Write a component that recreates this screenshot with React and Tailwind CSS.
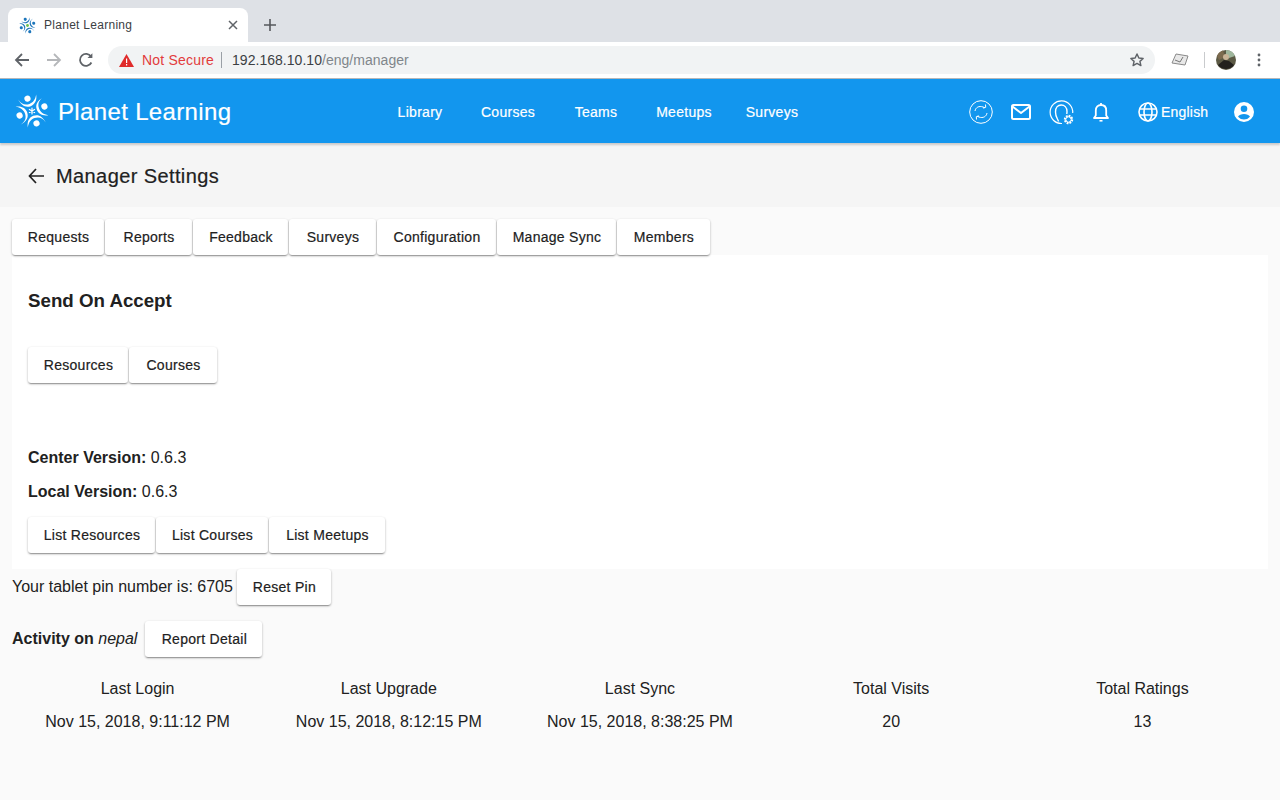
import React from "react";

const F = "font-['Liberation_Sans',Arial,sans-serif]";

function Btn({ children, className = "" }) {
  return (
    <button className={`h-9 pl-px bg-white rounded-[3px] text-[14px] tracking-[0.28px] [-webkit-text-stroke:0.2px] text-[#212121] whitespace-nowrap shadow-[0_2px_1px_-1px_rgba(0,0,0,0.2),0_1px_2px_0_rgba(0,0,0,0.22),0_1px_3px_0_rgba(0,0,0,0.12)] ${className}`}>
      {children}
    </button>
  );
}

function Logo({ size, dark }) {
  const main = dark ? "#1b75bb" : "#fff";
  const arms = [-20, 70, 160, 250];
  return (
    <svg width={size} height={size} viewBox="0 0 34 34">
      {arms.map((a) => (
        <g key={a} transform={`rotate(${a} 17 17)`}>
          <circle cx="17" cy="3.800" r="3.100" fill={main} />
          <path d="M8 1.500C9 7 12.500 9.500 17 9.500C21 9.500 24 7.500 26.500 3C25.500 9 21.500 12 17.500 12C12 12 8.800 8 8 1.500Z" fill={main} />
        </g>
      ))}
      {dark ? <circle cx="17" cy="17" r="2.800" fill="#6cbf4b" /> : (
        <g stroke="#fff" strokeWidth="1.200" strokeLinecap="round">
          <path d="M17 14v6M14.400 15.500l5.200 3M19.600 15.500l-5.200 3" />
        </g>
      )}
    </svg>
  );
}

function NavLink({ children }) {
  return <span className="w-[88px] text-[14px] tracking-[0.28px] [-webkit-text-stroke:0.2px] text-white text-center">{children}</span>;
}

export default function App() {
  return (
    <div className={`${F} w-[1280px] h-[800px] overflow-hidden bg-[#fafafa] text-[#212121] flex flex-col`}>
      {/* tab strip */}
      <div className="h-[42px] bg-[#dee1e6] flex items-end pl-2 shrink-0">
        <div className="w-[240px] h-[34px] bg-white rounded-t-[8px] flex items-center pl-[11px] pr-[10px]">
          <Logo size={17} dark />
          <span className="ml-[8px] text-[12px] tracking-[0.28px] text-[#3c4043] flex-1">Planet Learning</span>
          <svg width="10" height="10" viewBox="0 0 10 10" stroke="#5f6368" strokeWidth="1.5"><path d="M1 1l8 8M9 1l-8 8" /></svg>
        </div>
        <div className="w-[44px] h-[34px] flex items-center justify-center">
          <svg width="14" height="14" viewBox="0 0 14 14" stroke="#55585c" strokeWidth="1.6"><path d="M7 1v12M1 7h12" /></svg>
        </div>
      </div>

      {/* address toolbar */}
      <div className="h-[37px] bg-white border-b border-[#b4b6b9] flex items-center shrink-0">
        <div className="w-[108px] flex items-center pl-[14px] gap-[16px] shrink-0">
          <svg width="16" height="16" viewBox="0 0 16 16" fill="none" stroke="#5f6368" strokeWidth="1.8"><path d="M15 8H2M8 2L2 8l6 6" /></svg>
          <svg width="16" height="16" viewBox="0 0 16 16" fill="none" stroke="#b5b7ba" strokeWidth="1.8"><path d="M1 8h13M8 2l6 6-6 6" /></svg>
          <svg width="16" height="16" viewBox="0 0 16 16" fill="none" stroke="#5f6368" strokeWidth="1.8"><path d="M13.400 10.500A6 6 0 1 1 13 4.600" /><path d="M14.400 1.200v4.900H9.500z" fill="#5f6368" stroke="none" /></svg>
        </div>
        <div className="w-[1047px] h-7 rounded-full bg-[#f1f3f4] flex items-center pl-[11px] pr-[10px] shrink-0">
          <svg width="15" height="13" viewBox="0 0 15 13"><path d="M7.500 0L15 13H0z" fill="#e02b2b" /><path d="M7 4.500h1.200V9H7zM7 10h1.200v1.400H7z" fill="#fff" /></svg>
          <span className="ml-[8px] text-[14px] tracking-[0.2px] text-[#e23c3c]">Not Secure</span>
          <span className="w-px h-4 bg-[#9aa0a6] ml-[7px] mr-[10px]" />
          <span className="text-[14px] tracking-[0.03px] text-[#3c4043]">192.168.10.10<span className="text-[#80868b]">/eng/manager</span></span>
          <span className="flex-1" />
          <svg width="16" height="16" viewBox="0 0 24 24" fill="none" stroke="#5f6368" strokeWidth="2.200" strokeLinejoin="round"><path d="M12 3l2.800 6 6.400.7-4.800 4.300 1.400 6.400L12 17.100l-5.800 3.300 1.400-6.400L2.800 9.700l6.400-.7z" /></svg>
        </div>
        <div className="flex-1 flex items-center pl-[16px]">
          <svg width="18" height="14" viewBox="0 0 18 14"><path d="M5 1l12 2-3 9-13-2z" fill="#e8e8e8" stroke="#8a8a8a" strokeWidth="1" /><path d="M4 7l5 2 3-5" fill="none" stroke="#777" strokeWidth="1" /></svg>
          <span className="w-px h-4 bg-[#c9cbcd] ml-[15px]" />
          <svg className="ml-[11px]" width="20" height="20" viewBox="0 0 20 20">
            <circle cx="10" cy="10" r="10" fill="#5c5a45" />
            <path d="M10 0a10 10 0 0 1 9 6l-6 2-3-3z" fill="#9fb79d" />
            <path d="M1 6a10 10 0 0 1 6-5.500L9 7 3 10z" fill="#7b6a4e" />
            <circle cx="10" cy="7" r="3" fill="#c9b497" />
            <path d="M2 15l6-5 5 1 5 4a10 10 0 0 1-16 0z" fill="#23211d" />
          </svg>
          <svg className="ml-[21px]" width="4" height="14" viewBox="0 0 4 14" fill="#5f6368"><circle cx="2" cy="2" r="1.400" /><circle cx="2" cy="7" r="1.400" /><circle cx="2" cy="12" r="1.400" /></svg>
        </div>
      </div>

      {/* app nav */}
      <header className="h-16 pt-[2px] bg-[#1296ee] flex items-center relative z-10 shrink-0 shadow-[0_2px_2px_rgba(0,0,0,0.18)]">
        <div className="ml-[15px] -mt-[2px]"><Logo size={34} /></div>
        <span className="ml-[9px] w-[173px] text-[24px] tracking-[0.35px] [-webkit-text-stroke:0.2px] text-white whitespace-nowrap">Planet Learning</span>
        <nav className="ml-[145px] flex items-center">
          <NavLink>Library</NavLink>
          <NavLink>Courses</NavLink>
          <NavLink>Teams</NavLink>
          <NavLink>Meetups</NavLink>
          <NavLink>Surveys</NavLink>
        </nav>
        <div className="ml-[153px] flex items-center">
          <svg width="24" height="24" viewBox="0 0 24 24" fill="none" stroke="#fff" strokeWidth="1">
            <circle cx="12" cy="12" r="11.300" />
            <path d="M6 11c.5-3.500 4-5.500 8-4l2 .8M16.500 4.500l.2 2.800-2.700.8M18 13c-.5 3.500-4 5.500-8 4l-2-.8M7.500 19.500l-.2-2.800 2.700-.8" />
          </svg>
          <svg className="ml-[18px]" width="20" height="16" viewBox="0 0 20 16" fill="none" stroke="#fff" strokeWidth="2" strokeLinejoin="round"><rect x="1" y="1" width="18" height="14" rx="1.500" /><path d="M1.500 2.500L10 9l8.500-6.500" /></svg>
          <svg className="ml-[18px]" width="25" height="25" viewBox="0 0 25 25" fill="none">
            <path d="M13 23.500A11.300 11.300 0 1 1 23.700 13" stroke="#fff" strokeWidth="1.200" />
            <path d="M9.500 21.500C9 19 6.500 17.500 6.500 12C6.500 7.500 9 5 12.200 5S18 7.500 18 11.500c0 1-.1 1.800-.3 2.500" stroke="#fff" strokeWidth="1.400" />
            <circle cx="19.500" cy="19.500" r="5.200" fill="#1296ee" />
            <circle cx="19.500" cy="19.500" r="3.500" stroke="#fff" strokeWidth="2.400" strokeDasharray="1.700 1" />
            <circle cx="19.500" cy="19.500" r="2.800" stroke="#fff" strokeWidth="1" />
          </svg>
          <svg className="ml-[19px]" width="16" height="20" viewBox="0 0 16 20" fill="none" stroke="#fff" strokeWidth="1.800"><path d="M1 16h14l-1.800-2.500V8.500C13.200 5 11 3 8 3S2.800 5 2.800 8.500v5z" strokeLinejoin="round" /><path d="M8 1v2" /><path d="M6.500 18.800h3" strokeWidth="1.600" /></svg>
          <svg className="ml-[29px]" width="20" height="20" viewBox="0 0 20 20" fill="none" stroke="#fff" strokeWidth="1.600"><circle cx="10" cy="10" r="9" /><ellipse cx="10" cy="10" rx="4" ry="9" /><path d="M1.500 7h17M1.500 13h17" /></svg>
          <span className="ml-[3px] text-[14px] tracking-[0.2px] [-webkit-text-stroke:0.2px] text-white">English</span>
          <svg className="ml-[26px]" width="20" height="20" viewBox="0 0 20 20"><path fillRule="evenodd" fill="#fff" d="M10 0a10 10 0 1 1 0 20 10 10 0 0 1 0-20zm0 3.500a3.300 3.300 0 1 0 0 6.600 3.300 3.300 0 0 0 0-6.600zM10 12c-2.600 0-5 1-6 2.700a7.800 7.800 0 0 0 12 0C15 13 12.600 12 10 12z" /></svg>
        </div>
      </header>

      {/* sub toolbar */}
      <div className="h-[64px] pt-[2px] bg-[#f5f5f5] flex items-center pl-[28px] shrink-0">
        <svg width="16" height="16" viewBox="0 0 16 16" fill="none" stroke="#212121" strokeWidth="1.700"><path d="M16 8H1.500M8 1L1.500 8 8 15" /></svg>
        <h1 className="ml-[12px] text-[20px] tracking-[0.4px] [-webkit-text-stroke:0.2px]">Manager Settings</h1>
      </div>

      {/* content */}
      <main className="px-3 pt-3 flex flex-col">
        <div className="relative z-10 flex gap-px">
          <Btn className="w-[92px]">Requests</Btn>
          <Btn className="w-[87px]">Reports</Btn>
          <Btn className="w-[95px]">Feedback</Btn>
          <Btn className="w-[87px]">Surveys</Btn>
          <Btn className="w-[119px]">Configuration</Btn>
          <Btn className="w-[119px]">Manage Sync</Btn>
          <Btn className="w-[93px]">Members</Btn>
        </div>

        <section className="h-[314px] bg-white px-4 flex flex-col">
          <h2 className="mt-[34px] h-[24px] leading-[24px] text-[18.72px] font-bold">Send On Accept</h2>
          <div className="mt-[34px] flex gap-px">
            <Btn className="w-[100px]">Resources</Btn>
            <Btn className="w-[88px]">Courses</Btn>
          </div>
          <p className="mt-[65px] text-[16px] leading-[20px]"><b>Center Version:</b> 0.6.3</p>
          <p className="mt-[14px] text-[16px] leading-[20px]"><b>Local Version:</b> 0.6.3</p>
          <div className="mt-[15px] flex gap-px">
            <Btn className="w-[127px]">List Resources</Btn>
            <Btn className="w-[112px]">List Courses</Btn>
            <Btn className="w-[116px]">List Meetups</Btn>
          </div>
        </section>

        <div className="h-9 flex items-center text-[16px]">
          <span>Your tablet pin number is: 6705</span>
          <Btn className="ml-1 w-[94px]">Reset Pin</Btn>
        </div>

        <div className="mt-4 h-9 flex items-center text-[16px]">
          <span><b>Activity on</b> <i>nepal</i></span>
          <Btn className="ml-2 w-[117px]">Report Detail</Btn>
        </div>

        <div className="mt-[22px] grid grid-cols-5 text-[16px] text-center leading-[20px] gap-y-[13px]">
          <span>Last Login</span>
          <span>Last Upgrade</span>
          <span>Last Sync</span>
          <span>Total Visits</span>
          <span>Total Ratings</span>
          <span>Nov 15, 2018, 9:11:12 PM</span>
          <span>Nov 15, 2018, 8:12:15 PM</span>
          <span>Nov 15, 2018, 8:38:25 PM</span>
          <span>20</span>
          <span>13</span>
        </div>
      </main>
    </div>
  );
}
